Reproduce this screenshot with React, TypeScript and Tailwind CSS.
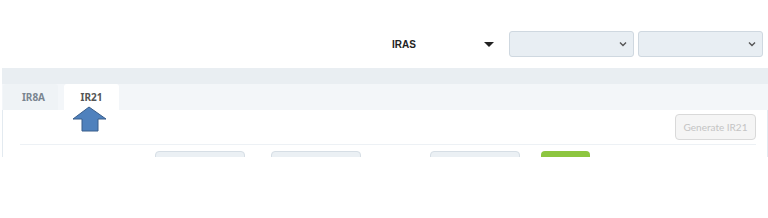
import React from "react";

const Select = () => (
  <div className="flex h-[26px] w-[125px] items-center justify-end rounded-[3px] border border-[#cfd8e0] bg-[#e8eef3] pr-[6px]">
    <svg width="8" height="6" viewBox="0 0 8 6">
      <path d="M1 1.5 L4 4.5 L7 1.5" fill="none" stroke="#555" strokeWidth="1.4" />
    </svg>
  </div>
);

const App = () => {
  return (
    <div className="relative h-[218px] w-[768px] overflow-hidden bg-white font-['Open_Sans',sans-serif]">
      {/* header */}
      <div className="flex items-center pl-[392px] pt-[31px]">
        <div className="flex w-[102px] items-center justify-between">
          <span className="text-[10px] font-bold text-[#222] font-['Liberation_Sans',sans-serif]">IRAS</span>
          <svg width="10" height="5" viewBox="0 0 10 5">
            <path d="M0 0 L10 0 L5 5 Z" fill="#222" />
          </svg>
        </div>
        <div className="ml-[15px]">
          <Select />
        </div>
        <div className="ml-[4px]">
          <Select />
        </div>
      </div>

      {/* panel */}
      <div className="ml-[2px] mt-[11px] h-[89px] overflow-hidden">
        <div className="h-[16px] bg-[#e9eef2]" />
        <div className="flex h-[26px] items-end bg-[#f3f6f9] pl-[1px]">
          <div className="flex h-[26px] w-[55px] items-center justify-center rounded-t-[3px] bg-[#eff3f6] pl-[6px] text-[10px] font-bold text-[#7a8590] font-['Noto_Sans',sans-serif]">
            IR8A
          </div>
          <div className="ml-[6px] flex h-[26px] w-[55px] items-center justify-center rounded-t-[3px] bg-white text-[10px] font-bold text-[#555] font-['Noto_Sans',sans-serif]">
            IR21
          </div>
        </div>
        <div className="h-[60px] border-l border-r border-[#e3eaf0] bg-white">
          <div className="flex justify-end pr-[11px] pt-[4px]">
            <button className="h-[26px] w-[81px] rounded-[4px] border border-[#d9d9d9] bg-[#f5f5f5] text-[10px] text-[#c4c4c4] font-['Lato',sans-serif]">
              Generate IR21
            </button>
          </div>
          <div className="ml-[17px] mr-[11px] mt-[4px] border-t border-[#edf1f5]" />
          <div className="mt-[6px] flex">
            <div className="ml-[152px] h-[14px] w-[90px] rounded-[4px] border border-[#d6dee5] bg-[#ebf0f4]" />
            <div className="ml-[26px] h-[14px] w-[90px] rounded-[4px] border border-[#d6dee5] bg-[#ebf0f4]" />
            <div className="ml-[69px] h-[14px] w-[90px] rounded-[4px] border border-[#d6dee5] bg-[#ebf0f4]" />
            <div className="ml-[21px] h-[14px] w-[49px] rounded-[4px] bg-[#8dc63f]" />
          </div>
        </div>
      </div>

      {/* annotation arrow */}
      <svg className="absolute left-[72px] top-[106px]" width="36" height="26" viewBox="0 0 36 26">
        <path d="M17 1 L34 13 L26 13 L26 25 L10 25 L10 13 L1 13 Z" fill="#4f81bd" stroke="#385d8a" strokeWidth="1" />
      </svg>
    </div>
  );
};

export default App;
